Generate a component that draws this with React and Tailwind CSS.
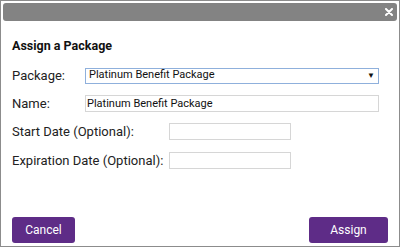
import { useState } from "react";

const Field = ({ label, labelWidth, children }) => (
  <div className="flex items-center h-[17px]">
    <label className="shrink-0 text-[13px] text-[#222]" style={{ width: labelWidth }}>
      {label}
    </label>
    {children}
  </div>
);

export default function App() {
  const [name, setName] = useState("Platinum Benefit Package");
  const [start, setStart] = useState("");
  const [expire, setExpire] = useState("");

  return (
    <div className="w-[400px] h-[247px] bg-white border border-[#8c8c8c] flex flex-col p-[2px] font-['Roboto',sans-serif]">
      <div className="h-[18px] bg-[#838383] rounded-[3px] flex items-center justify-end pr-[4px]">
        <svg width="8" height="8" viewBox="0 0 8 8">
          <path d="M1 1L7 7M7 1L1 7" stroke="white" strokeWidth="2" strokeLinecap="round" />
        </svg>
      </div>

      <div className="flex-1 flex flex-col px-[9px]">
        <h2 className="mt-[17px] text-[12.5px] font-bold text-[#111] leading-[16px]">Assign a Package</h2>

        <div className="mt-[13px] flex flex-col">
          <Field label="Package:" labelWidth="73px">
            <div className="w-[294px] h-[16px] border border-[#8fb0dc] flex items-center justify-between px-[3px] text-[11px] text-[#111]">
              <span>Platinum Benefit Package</span>
              <span className="text-[8px]">▼</span>
            </div>
          </Field>

          <div className="mt-[11px]">
            <Field label="Name:" labelWidth="73px">
              <input
                value={name}
                onChange={(e) => setName(e.target.value)}
                className="w-[294px] h-[17px] border border-[#d6d6d6] px-[1px] text-[11px] text-[#111] outline-none"
              />
            </Field>
          </div>

          <div className="mt-[11px]">
            <Field label="Start Date (Optional):" labelWidth="157px">
              <input
                value={start}
                onChange={(e) => setStart(e.target.value)}
                className="w-[122px] h-[17px] border border-[#d6d6d6] text-[11px] outline-none"
              />
            </Field>
          </div>

          <div className="mt-[12px]">
            <Field label="Expiration Date (Optional):" labelWidth="157px">
              <input
                value={expire}
                onChange={(e) => setExpire(e.target.value)}
                className="w-[122px] h-[17px] border border-[#d6d6d6] text-[11px] outline-none"
              />
            </Field>
          </div>
        </div>

        <div className="mt-auto mb-[1px] flex justify-between">
          <button className="w-[63px] h-[26px] rounded-[3px] bg-[#5e2c87] text-white text-[12px]">Cancel</button>
          <button className="w-[79px] h-[26px] rounded-[3px] bg-[#5e2c87] text-white text-[12px]">Assign</button>
        </div>
      </div>
    </div>
  );
}
